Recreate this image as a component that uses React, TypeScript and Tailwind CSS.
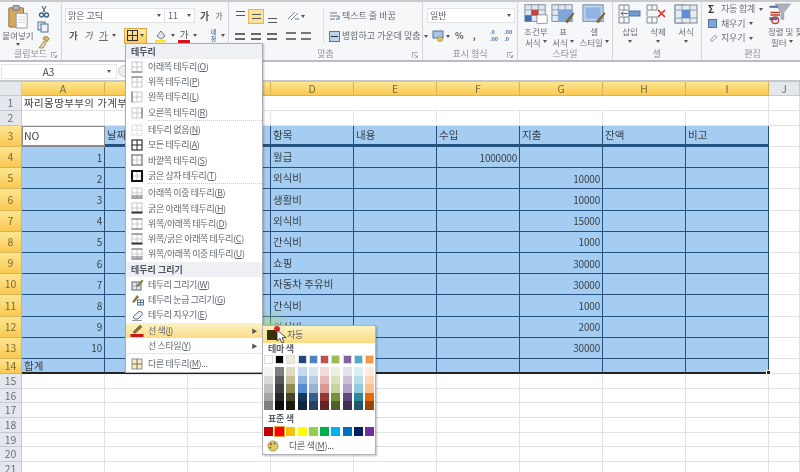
import * as React from "react"

const themeTop = ["#ffffff", "#000000", "#eeece1", "#1f497d", "#4f81bd", "#c0504d", "#9bbb59", "#8064a2", "#4bacc6", "#f79646"]
const themeTints = [
  ["#f2f2f2", "#d9d9d9", "#bfbfbf", "#a6a6a6", "#808080"],
  ["#7f7f7f", "#595959", "#404040", "#262626", "#0d0d0d"],
  ["#ddd9c3", "#c4bd97", "#938953", "#494429", "#1d1b10"],
  ["#c6d9f0", "#8db3e2", "#548dd4", "#17365d", "#0f243e"],
  ["#dbe5f1", "#b8cce4", "#95b3d7", "#366092", "#244061"],
  ["#f2dcdb", "#e5b9b7", "#d99694", "#953734", "#632423"],
  ["#ebf1dd", "#d7e3bc", "#c3d69b", "#76923c", "#4f6128"],
  ["#e5e0ec", "#ccc1d9", "#b2a2c7", "#5f497a", "#3f3151"],
  ["#dbeef3", "#b7dde8", "#92cddc", "#31859b", "#205867"],
  ["#fdeada", "#fbd5b5", "#fac08f", "#e36c09", "#974806"],
]
const standard = ["#c00000", "#ff0000", "#ffc000", "#ffff00", "#92d050", "#00b050", "#00b0f0", "#0070c0", "#002060", "#7030a0"]

const columns = ["A", "B", "C", "D", "E", "F", "G", "H", "I"]

const tableRows = [
  { no: 1, item: "월급", income: "1000000", spend: "" },
  { no: 2, item: "외식비", income: "", spend: "10000" },
  { no: 3, item: "생활비", income: "", spend: "10000" },
  { no: 4, item: "외식비", income: "", spend: "15000" },
  { no: 5, item: "간식비", income: "", spend: "1000" },
  { no: 6, item: "쇼핑", income: "", spend: "30000" },
  { no: 7, item: "자동차 주유비", income: "", spend: "30000" },
  { no: 8, item: "간식비", income: "", spend: "1000" },
  { no: 9, item: "외식비", income: "", spend: "2000" },
  { no: 10, item: "", income: "", spend: "30000" },
]

type Edge = "top" | "bottom" | "left" | "right" | "outer" | "all" | "thick" | "none" | "dbl" | "thickb" | "tb" | "tthickb" | "tdbl"

function BorderIcon({ kind, className = "" }: { kind: Edge; className?: string }) {
  const has = (...k: Edge[]) => k.includes(kind)
  const dark = "#666b70"
  return (
    <svg width="12" height="12" viewBox="0 0 12 12" className={className}>
      <rect x="1" y="1" width="10" height="10" fill="none" stroke="#c4c8cc" strokeWidth="1" strokeDasharray={has("none") ? "1.5 1" : undefined} />
      <path d="M6 1V11M1 6H11" stroke={has("all") ? "#222" : "#c4c8cc"} strokeWidth="1" strokeDasharray={has("none") ? "1.5 1" : undefined} />
      {has("top", "tb", "tthickb", "tdbl", "outer") && <path d="M0.5 1H11.5" stroke={dark} />}
      {has("bottom", "tb", "outer", "dbl", "tdbl") && <path d="M0.5 11H11.5" stroke={dark} />}
      {has("left", "outer") && <path d="M1 0.5V11.5" stroke={dark} />}
      {has("right", "outer") && <path d="M11 0.5V11.5" stroke={dark} />}
      {has("all") && <rect x="1" y="1" width="10" height="10" fill="none" stroke="#222" />}
      {has("thick") && <rect x="1" y="1" width="10" height="10" fill="none" stroke="#111" strokeWidth="2" />}
      {has("dbl", "tdbl") && <path d="M0.5 9H11.5" stroke={dark} />}
      {has("thickb", "tthickb") && <path d="M0.5 10.5H11.5" stroke="#333" strokeWidth="2" />}
    </svg>
  )
}

function MenuRow({ icon, label, hot, suffix = "", arrow, active }: {
  icon?: React.ReactNode
  label?: string
  hot?: string
  suffix?: string
  arrow?: boolean
  active?: boolean
}) {
  return (
    <div className={`flex h-[15.3px] items-center text-[9px] tracking-[-0.4px] text-[#60666f] ${active ? "bg-gradient-to-b from-[#fdf3c4] to-[#fbdc86]" : ""}`}>
      <span className="flex w-[22px] shrink-0 justify-center">{icon}</span>
      <span className="whitespace-nowrap">
        {label}
        {hot && (
          <>
            (<span className="underline">{hot}</span>)
          </>
        )}
        {suffix}
      </span>
      {arrow && <span className="ml-auto mr-[5px] text-[6px] text-[#555]">▶</span>}
    </div>
  )
}

function MenuHead({ children }: { children: React.ReactNode }) {
  return <div className="flex h-[15px] items-center bg-[#eef0f3] pl-[5px] text-[9px] font-bold text-[#4a515b]">{children}</div>
}

function BorderMenu() {
  return (
    <div className="absolute left-[125px] top-[43px] z-20 w-[138px] border border-[#a9adb3] bg-white shadow-[1px_1px_2px_rgba(0,0,0,0.25)]">
      <MenuHead>테두리</MenuHead>
      <MenuRow icon={<BorderIcon kind="bottom" />} label="아래쪽 테두리" hot="O" />
      <MenuRow icon={<BorderIcon kind="top" />} label="위쪽 테두리" hot="P" />
      <MenuRow icon={<BorderIcon kind="left" />} label="왼쪽 테두리" hot="L" />
      <MenuRow icon={<BorderIcon kind="right" />} label="오른쪽 테두리" hot="R" />
      <div className="ml-[22px] h-[2px] border-t border-dotted border-[#c9ccd1]" />
      <MenuRow icon={<BorderIcon kind="none" />} label="테두리 없음" hot="N" />
      <MenuRow icon={<BorderIcon kind="all" />} label="모든 테두리" hot="A" />
      <MenuRow icon={<BorderIcon kind="outer" />} label="바깥쪽 테두리" hot="S" />
      <MenuRow icon={<BorderIcon kind="thick" />} label="굵은 상자 테두리" hot="T" />
      <div className="ml-[22px] h-[2px] border-t border-dotted border-[#c9ccd1]" />
      <MenuRow icon={<BorderIcon kind="dbl" />} label="아래쪽 이중 테두리" hot="B" />
      <MenuRow icon={<BorderIcon kind="thickb" />} label="굵은 아래쪽 테두리" hot="H" />
      <MenuRow icon={<BorderIcon kind="tb" />} label="위쪽/아래쪽 테두리" hot="D" />
      <MenuRow icon={<BorderIcon kind="tthickb" />} label="위쪽/굵은 아래쪽 테두리" hot="C" />
      <MenuRow icon={<BorderIcon kind="tdbl" />} label="위쪽/아래쪽 이중 테두리" hot="U" />
      <MenuHead>테두리 그리기</MenuHead>
      <MenuRow icon={<DrawIcon />} label="테두리 그리기" hot="W" />
      <MenuRow icon={<GridPenIcon />} label="테두리 눈금 그리기" hot="G" />
      <MenuRow icon={<EraserIcon />} label="테두리 지우기" hot="E" />
      <MenuRow icon={<PenColorIcon />} label="선 색" hot="I" arrow active />
      <MenuRow label="선 스타일" hot="Y" arrow />
      <div className="h-[3px] border-t border-[#e2e4e7]" />
      <MenuRow icon={<MoreBorderIcon />} label="다른 테두리" hot="M" suffix="..." />
    </div>
  )
}

function DrawIcon() {
  return (
    <svg width="13" height="13" viewBox="0 0 13 13">
      <rect x="1" y="4" width="9" height="8" fill="#dfe8f3" stroke="#5c6670" />
      <path d="M1 8H10M5.5 4V12" stroke="#9aa3ad" />
      <path d="M5 8L11 1.5L12.5 3L7 9Z" fill="#8a7a40" />
    </svg>
  )
}

function GridPenIcon() {
  return (
    <svg width="13" height="13" viewBox="0 0 13 13">
      <path d="M1 9L6 2L8 4L3 10Z" fill="#8a7a40" />
      <rect x="6.5" y="7" width="6" height="5" fill="none" stroke="#52708f" />
      <path d="M9.5 7V12M6.5 9.5H12.5" stroke="#52708f" />
    </svg>
  )
}

function EraserIcon() {
  return (
    <svg width="13" height="13" viewBox="0 0 13 13">
      <path d="M2 8L7 3C8 2 11 2.5 11.5 4C12 5 11 6 10 7L7 10H3.5Z" fill="#e8ecf2" stroke="#6a7480" />
      <path d="M1 11.5H11" stroke="#8f98a3" />
    </svg>
  )
}

function PenColorIcon() {
  return (
    <svg width="14" height="13" viewBox="0 0 14 13">
      <path d="M3 8L10 1L12 3L5 9.5Z" fill="#8f6f3a" stroke="#5d4a28" strokeWidth="0.5" />
      <rect x="0.5" y="10" width="13" height="3" fill="#d2161c" />
    </svg>
  )
}

function MoreBorderIcon() {
  return (
    <svg width="12" height="12" viewBox="0 0 12 12">
      <rect x="1" y="1" width="10" height="10" fill="#f6ecd0" stroke="#8a8f96" />
      <path d="M6 1V11M1 6H11" stroke="#8a6d2f" />
    </svg>
  )
}

function Swatch({ color, className = "" }: { color: string; className?: string }) {
  return <span className={`block w-[9px] ${className}`} style={{ backgroundColor: color }} />
}

function ColorMenu() {
  return (
    <div className="absolute left-[262px] top-[325px] z-30 w-[114px] border border-[#b0b4ba] bg-white shadow-[1px_1px_2px_rgba(0,0,0,0.25)]">
      <div className="flex h-[17px] items-center bg-gradient-to-b from-[#fdf2c0] to-[#fbdb80]">
        <span className="ml-[4px] block h-[10px] w-[10px] bg-[#343409]" />
        <span className="ml-[10px] text-[9px] tracking-[-0.3px] text-[#5a5c60]">자동</span>
      </div>
      <div className="flex h-[11px] items-center pl-[5px] text-[9px] font-bold tracking-[-0.3px] text-[#596069]">테마 색</div>
      <div className="mt-[1px] flex justify-between px-[1px]">
        {themeTop.map((c) => (
          <Swatch key={c} color={c} className="h-[9px] border border-[#dcdcdc]" />
        ))}
      </div>
      <div className="mt-[3px] flex justify-between px-[1px]">
        {themeTints.map((col, i) => (
          <div key={i} className="flex flex-col">
            {col.map((c) => (
              <Swatch key={c} color={c} className="h-[8.5px]" />
            ))}
          </div>
        ))}
      </div>
      <div className="mt-[4px] flex h-[11px] items-center pl-[5px] text-[9px] font-bold tracking-[-0.3px] text-[#596069]">표준 색</div>
      <div className="mt-[2px] flex justify-between px-[1px]">
        {standard.map((c) => (
          <Swatch key={c} color={c} className={`h-[9px] ${c === "#ff0000" ? "outline outline-1 outline-[#f2a13a]" : ""}`} />
        ))}
      </div>
      <div className="mt-[2px] flex h-[16px] items-center text-[9px] tracking-[-0.3px] text-[#5a5c60]">
        <svg width="12" height="12" viewBox="0 0 12 12" className="ml-[4px]">
          <circle cx="6" cy="6" r="5" fill="#e8c860" stroke="#8b7430" strokeWidth="0.7" />
          <circle cx="4" cy="4" r="1" fill="#c22" />
          <circle cx="7.5" cy="3.5" r="1" fill="#27a" />
          <circle cx="3.5" cy="7.5" r="1" fill="#2a5" />
        </svg>
        <span className="ml-[10px]">
          다른 색(<span className="underline">M</span>)...
        </span>
      </div>
    </div>
  )
}

function CursorGlow() {
  return <div className="absolute left-[244px] top-[308px] z-10 h-[50px] w-[50px] rounded-full bg-[radial-gradient(circle,rgba(170,220,110,0.8),rgba(170,220,110,0)_70%)]" />
}

function Cursor() {
  return (
    <div className="pointer-events-none absolute left-[274px] top-[326px] z-40 h-[20px] w-[14px]">
      <span className="absolute left-0 top-0 block h-[6px] w-[6px] rounded-full bg-[#d8262c]" />
      <svg width="12" height="16" viewBox="0 0 12 16" className="absolute left-[2px] top-[3px]">
        <path d="M1 1V12L4 9.5L6 14L8 13L6 8.8L10 8.5Z" fill="#fff" stroke="#222" strokeWidth="0.8" />
      </svg>
    </div>
  )
}

function Caret({ className = "" }: { className?: string }) {
  return <span className={`inline-block h-0 w-0 border-x-[2px] border-t-[3px] border-x-transparent border-t-[#555] ${className}`} />
}

function RibbonGroup({ label, width, launcher, children }: {
  label: string
  width: string
  launcher?: boolean
  children: React.ReactNode
}) {
  return (
    <div className={`flex shrink-0 flex-col border-r border-[#d3d6da] ${width}`}>
      <div className="h-[47px]">{children}</div>
      <div className="relative flex h-[12px] items-center justify-center text-[9px] text-[#8f949b]">
        {label}
        {launcher && (
          <svg width="6" height="6" viewBox="0 0 6 6" className="absolute right-[4px] top-[4px]">
            <path d="M0.5 5.5V0.5H5.5M2 2L5.5 5.5M5.5 3V5.5H3" fill="none" stroke="#9097a0" strokeWidth="0.8" />
          </svg>
        )}
      </div>
    </div>
  )
}

function PasteIcon() {
  return (
    <svg width="22" height="24" viewBox="0 0 24 26">
      <rect x="2" y="3" width="16" height="21" rx="1" fill="#d9a860" stroke="#8d6a38" />
      <rect x="6.5" y="0.5" width="7" height="5" rx="1" fill="#aeb4bb" stroke="#6d7278" />
      <path d="M10 9H22V25H10Z" fill="#fdfdfd" stroke="#8f959c" />
      <path d="M12 13H20M12 16H20M12 19H20" stroke="#cfd3d8" />
    </svg>
  )
}

function CellStylesIcon({ variant }: { variant: 0 | 1 | 2 }) {
  return (
    <svg width="24" height="22" viewBox="0 0 26 22">
      <rect x="1" y="1" width="22" height="18" fill={variant === 2 ? "#b7d0ee" : "#dfe8f3"} stroke="#7e8a97" />
      {variant !== 2 && <path d="M1 6.5H23M1 12.5H23M8 1V19M15.5 1V19" stroke="#7e8a97" strokeWidth="0.8" />}
      {variant === 0 && <rect x="8" y="6.5" width="7.5" height="6" fill="#c8423c" />}
      {variant === 0 && <rect x="1" y="12.5" width="7" height="6.5" fill="#3f6fb0" />}
      {variant === 1 && <rect x="8" y="6.5" width="15" height="12.5" fill="#7fa6d8" />}
      {variant === 2 && <rect x="4" y="4" width="16" height="12" fill="#8fb4e4" />}
      {variant === 0 && <rect x="14" y="12" width="11" height="9" fill="#fff" stroke="#555" strokeWidth="0.6" />}
      {variant !== 0 && <path d="M15 19L24 9L25.5 10.5L18 21Z" fill="#7b6a3d" />}
    </svg>
  )
}

function CellsIcon({ variant }: { variant: 0 | 1 | 2 }) {
  return (
    <svg width="24" height="20" viewBox="0 0 24 20">
      <path d="M1 1H11V6H1ZM1 13H11V19H1ZM6 1V6M6 13V19M1 7V12" fill="none" stroke="#7e8a97" />
      {variant === 0 && <rect x="11" y="7" width="11" height="5" fill="#6f9bd1" stroke="#4d76a8" />}
      {variant === 0 && <path d="M3 9.5H10M3 9.5L5.5 7.5M3 9.5L5.5 11.5" fill="none" stroke="#444" strokeWidth="0.8" />}
      {variant === 1 && <path d="M12 6L19 13M19 6L12 13" stroke="#d6332b" strokeWidth="1.6" />}
      {variant === 2 && <rect x="1" y="1" width="22" height="18" fill="#e6ecf4" stroke="#7e8a97" />}
      {variant === 2 && <path d="M8 1V19M16 1V19M1 6H23M1 14H23" stroke="#7e8a97" strokeWidth="0.8" />}
      {variant === 2 && <rect x="8" y="6" width="8" height="8" fill="#5f8fd0" />}
    </svg>
  )
}

function BigButton({ icon, lines, widthClass }: { icon: React.ReactNode; lines: [string, string]; widthClass: string }) {
  return (
    <div className={`flex flex-col items-center pt-[2px] text-[8.5px] leading-[10.5px] text-[#6b7078] ${widthClass}`}>
      <div className="flex h-[22px] items-center">{icon}</div>
      <div className="mt-[1px] whitespace-nowrap">{lines[0]}</div>
      <div className="flex h-[10.5px] items-center gap-[2px] whitespace-nowrap">
        {lines[1]}
        <Caret />
      </div>
    </div>
  )
}

function Ribbon() {
  return (
    <div className="flex h-[62px] border-b-2 border-[#b9bdc3] bg-[#f6f7f9] pt-[1px] shadow-[inset_0_2px_0_#c9cbce]">
      <RibbonGroup label="클립보드" width="w-[62px]" launcher>
        <div className="flex pt-[4px]">
          <div className="flex w-[36px] flex-col items-center text-[8.5px] leading-[10px] text-[#6b7078]">
            <PasteIcon />
            <span className="mt-[1px] whitespace-nowrap">붙여넣기</span>
            <Caret className="mt-[3px]" />
          </div>
          <div className="flex flex-col items-center gap-[3px] pl-[1px]">
            <svg width="12" height="13" viewBox="0 0 12 13">
              <path d="M4 1L7 7M8 1L5 7" stroke="#6c7580" strokeWidth="1.2" />
              <circle cx="3.5" cy="10" r="2" fill="none" stroke="#3c5f8c" strokeWidth="1.3" />
              <circle cx="8.5" cy="10" r="2" fill="none" stroke="#3c5f8c" strokeWidth="1.3" />
            </svg>
            <svg width="14" height="12" viewBox="0 0 14 12">
              <rect x="1" y="1" width="7" height="8" fill="#dbe6f3" stroke="#55729a" />
              <rect x="4" y="3" width="7" height="8" fill="#eef3f9" stroke="#55729a" />
            </svg>
            <svg width="12" height="13" viewBox="0 0 12 13">
              <rect x="6" y="0.5" width="5" height="4" fill="#d7b560" stroke="#8a6d2f" strokeWidth="0.7" transform="rotate(35 8 2)" />
              <path d="M6 5L1 12H5L8 7Z" fill="#e9d59c" stroke="#8a6d2f" strokeWidth="0.7" />
            </svg>
          </div>
        </div>
      </RibbonGroup>

      <RibbonGroup label="" width="w-[167px]">
        <div className="flex flex-col pl-[3px] pt-[7px]">
          <div className="flex h-[15px] items-center">
            <div className="flex h-[15px] w-[100px] items-center justify-between border border-[#dfe2e6] bg-white pl-[2px] pr-[3px] text-[9px] text-[#5c6067]">
              맑은 고딕
              <Caret />
            </div>
            <div className="flex h-[15px] w-[30px] items-center justify-between border border-l-0 border-[#dfe2e6] bg-white pl-[3px] pr-[3px] text-[9px] text-[#5c6067]">
              11
              <Caret />
            </div>
            <span className="ml-[5px] text-[10px] font-bold text-[#555]">가</span>
            <span className="ml-[6px] text-[8px] text-[#666]">가</span>
          </div>
          <div className="mt-[4px] flex h-[17px] items-center">
            <span className="ml-[4px] w-[15px] text-[9.5px] font-bold text-[#555]">가</span>
            <span className="w-[15px] text-[9.5px] italic text-[#666]">가</span>
            <span className="w-[13px] text-[9.5px] text-[#666] underline">가</span>
            <Caret />
            <div className="ml-[8px] flex h-[16px] w-[23px] items-center gap-[1px] border border-[#d9a93f] bg-gradient-to-b from-[#fde9a5] to-[#fbce5e] pl-[2px]">
              <svg width="11" height="11" viewBox="0 0 11 11">
                <rect x="0.5" y="0.5" width="10" height="10" fill="none" stroke="#333" />
                <path d="M5.5 0.5V10.5M0.5 5.5H10.5" stroke="#333" />
              </svg>
              <Caret className="ml-[1px] border-t-[#333]" />
            </div>
            <svg width="14" height="14" viewBox="0 0 14 14" className="ml-[7px]">
              <path d="M3 7L7 2L11 7L7 10Z" fill="#e2e7ee" stroke="#6d7680" />
              <rect x="1" y="11" width="11" height="2.5" fill="#ffe330" />
            </svg>
            <Caret className="ml-[3px]" />
            <span className="ml-[3px] flex h-[15px] w-[12px] flex-col items-center text-[9.5px] leading-[12px] text-[#555]">
              가
              <span className="block h-[2.5px] w-[12px] bg-[#d2161c]" />
            </span>
            <Caret className="ml-[3px]" />
            <span className="ml-[14px] flex flex-col text-[5.5px] font-bold leading-[7px] text-[#4f6f9c]">
              <span>내</span>
              <span>천</span>
            </span>
            <Caret className="ml-[5px]" />
          </div>
        </div>
      </RibbonGroup>

      <RibbonGroup label="맞춤" width="w-[194px]" launcher>
        <div className="flex pl-[3px] pt-[7px]">
          <div className="flex flex-col">
            <div className="flex h-[16px] items-center">
              {["top", "mid", "bot"].map((v) => (
                <span key={v} className={`flex h-[15px] w-[16px] justify-center ${v === "mid" ? "items-center border border-[#e2b74e] bg-[#fde29a]" : v === "top" ? "items-start pt-[2px]" : "items-end pb-[1px]"}`}>
                  <span className="block h-[5px] w-[9px] border-y border-[#555]" />
                </span>
              ))}
              <svg width="14" height="12" viewBox="0 0 14 12" className="ml-[6px]">
                <path d="M2 9L9 2M5 10L12 3" stroke="#7b8087" />
                <path d="M9 9H13" stroke="#4a6f9f" />
              </svg>
              <Caret className="ml-[1px]" />
            </div>
            <div className="mt-[4px] flex h-[16px] items-center">
              {[0, 1, 2].map((v) => (
                <span key={v} className="flex h-[15px] w-[16px] items-center justify-center">
                  <span className="block h-[7px] w-[10px] border-y-2 border-[#666]" />
                </span>
              ))}
              <span className="ml-[6px] block h-[8px] w-[10px] border-y-2 border-[#777]" />
              <span className="ml-[5px] block h-[8px] w-[10px] border-y-2 border-[#777]" />
            </div>
          </div>
          <div className="ml-[12px] flex flex-col border-l border-[#dcdfe3] pl-[5px] text-[9px] text-[#666b73]">
            <div className="flex h-[16px] items-center gap-[2px] whitespace-nowrap">
              <svg width="11" height="11" viewBox="0 0 11 11">
                <path d="M1 2H8M1 5H10M1 8H6" stroke="#6d7680" />
                <path d="M10 5V8H7" fill="none" stroke="#3f6fb0" />
              </svg>
              텍스트 줄 바꿈
            </div>
            <div className="mt-[4px] flex h-[16px] items-center gap-[2px] whitespace-nowrap">
              <svg width="11" height="11" viewBox="0 0 11 11">
                <rect x="0.5" y="0.5" width="10" height="10" fill="#bcd2ec" stroke="#5277a8" />
                <path d="M2 5.5H9" stroke="#333" />
              </svg>
              병합하고 가운데 맞춤
              <Caret className="ml-[1px]" />
            </div>
          </div>
        </div>
      </RibbonGroup>

      <RibbonGroup label="표시 형식" width="w-[95px]" launcher>
        <div className="flex flex-col px-[4px] pt-[7px]">
          <div className="flex h-[15px] w-[88px] items-center justify-between border border-[#dfe2e6] bg-white pl-[2px] pr-[3px] text-[9px] text-[#5c6067]">
            일반
            <Caret />
          </div>
          <div className="mt-[5px] flex h-[16px] items-center pl-[5px] text-[9px] text-[#555]">
            <svg width="13" height="12" viewBox="0 0 13 12">
              <rect x="1" y="1" width="10" height="7" fill="#a7c3e6" stroke="#4f74a5" />
              <circle cx="8" cy="9" r="2.5" fill="#e8c450" stroke="#93772b" strokeWidth="0.6" />
            </svg>
            <Caret className="ml-[1px]" />
            <span className="ml-[5px] font-bold">%</span>
            <span className="ml-[9px] font-bold">,</span>
            <span className="ml-[14px] flex flex-col text-[5.5px] font-bold leading-[7px] text-[#4a6f9f]">
              <span>.0</span>
              <span>.00</span>
            </span>
            <span className="ml-[6px] flex flex-col text-[5.5px] font-bold leading-[7px] text-[#4a6f9f]">
              <span>.00</span>
              <span>.0</span>
            </span>
          </div>
        </div>
      </RibbonGroup>

      <RibbonGroup label="스타일" width="w-[95px]">
        <div className="flex pl-[4px]">
          <BigButton icon={<CellStylesIcon variant={0} />} lines={["조건부", "서식"]} widthClass="w-[28px]" />
          <BigButton icon={<CellStylesIcon variant={1} />} lines={["표", "서식"]} widthClass="w-[27px]" />
          <BigButton icon={<CellStylesIcon variant={2} />} lines={["셀", "스타일"]} widthClass="w-[36px]" />
        </div>
      </RibbonGroup>

      <RibbonGroup label="셀" width="w-[89px]">
        <div className="flex pl-[3px]">
          <BigButton icon={<CellsIcon variant={0} />} lines={["삽입", ""]} widthClass="w-[28px]" />
          <BigButton icon={<CellsIcon variant={1} />} lines={["삭제", ""]} widthClass="w-[28px]" />
          <BigButton icon={<CellsIcon variant={2} />} lines={["서식", ""]} widthClass="w-[28px]" />
        </div>
      </RibbonGroup>

      <div className="flex flex-1 flex-col">
        <div className="flex h-[47px]">
          <div className="flex w-[62px] shrink-0 flex-col pl-[6px] pt-[1px] text-[9px] leading-[14.5px] tracking-[-0.2px] text-[#6b7078]">
            <div className="flex items-center gap-[2px] whitespace-nowrap">
              <span className="w-[11px] text-[10px] font-bold text-[#333]">Σ</span>자동 합계<Caret className="ml-[2px]" />
            </div>
            <div className="flex items-center gap-[2px] whitespace-nowrap">
              <span className="mr-[2px] block h-[9px] w-[9px] border border-[#4f74a5] bg-[#7ea6d8]" />채우기<Caret className="ml-[2px]" />
            </div>
            <div className="flex items-center gap-[2px] whitespace-nowrap">
              <svg width="11" height="9" viewBox="0 0 9 9">
                <path d="M1 6L5 2C6 1 8 2 8 3L4 7H2Z" fill="#eef1f5" stroke="#767f8a" strokeWidth="0.7" />
              </svg>
              지우기<Caret className="ml-[2px]" />
            </div>
          </div>
          <div className="flex flex-col items-start pl-[4px] pt-[2px] text-[8.5px] leading-[10.5px] text-[#6b7078]">
            <svg width="24" height="22" viewBox="0 0 24 23">
              <path d="M7 1H23L16 10V17H13V10Z" fill="#aab2bd" stroke="#8a929c" strokeWidth="0.6" />
              <path d="M1 3H10V5H1ZM1 15H9V18H1Z" fill="#4e6f9a" />
              <path d="M2 10H12M2 12.5H12" stroke="#c43a32" strokeWidth="1.5" />
              <circle cx="7" cy="18" r="3.5" fill="none" stroke="#c43a32" strokeWidth="1.5" />
            </svg>
            <span className="mt-[1px] whitespace-nowrap">정렬 및 찾</span>
            <span className="flex items-center gap-[2px] whitespace-nowrap pl-[3px]">
              필터
              <Caret />
            </span>
          </div>
        </div>
        <div className="flex h-[12px] items-center justify-center text-[9px] text-[#8f949b]">편집</div>
      </div>
    </div>
  )
}

function FormulaBar() {
  return (
    <div className="flex h-[20px] items-center border-b-2 border-[#c4c7cc] bg-white">
      <div className="ml-[1px] flex h-[15px] w-[116px] items-center border border-[#e4e6e9] text-[10px] text-[#444]">
        <span className="flex-1 pr-[12px] text-center">A3</span>
        <Caret className="mr-[5px] border-t-[#333]" />
      </div>
      <span className="ml-[1px] block h-[12px] w-[12px] rounded-full border border-[#c9ccd1] bg-[#eceef1]" />
    </div>
  )
}

const bodyFont = "font-['Noto_Sans_CJK_KR','Noto_Sans',sans-serif]"
const hdrOn = "bg-gradient-to-b from-[#fde58f] to-[#f9c94f] text-[#7a6b3c] border-r border-b border-[#d9b457]"
const hdrOff = "bg-[#e4e7ec] text-[#6b7079] border-r border-b border-[#c6c9cf]"
const plainCell = "border-r border-b border-[#e0e2e5]"
const selCell = "bg-[#a4cdf1] border-r border-b border-[#24517e] text-[#3a3f46] text-[10.5px]"
const numCell = "text-[10px] tracking-[-0.2px]"

function RowHead({ n, on, h }: { n: number; on: boolean; h: string }) {
  return <div className={`flex items-center justify-center text-[10.5px] ${h} ${on ? hdrOn : hdrOff}`}>{n}</div>
}

function Sheet() {
  return (
    <div className="grid grid-cols-[22px_repeat(9,83px)_31px] text-[10.5px] text-[#444]">
      <div className={`h-[14px] ${hdrOff}`} />
      {columns.map((c) => (
        <div key={c} className={`flex h-[14px] items-center justify-center ${hdrOn}`}>{c}</div>
      ))}
      <div className={`flex h-[14px] items-center justify-center ${hdrOff}`}>J</div>

      <RowHead n={1} on={false} h="h-[15px]" />
      <div className={`col-span-9 flex h-[15px] items-center whitespace-nowrap pl-[2px] tracking-[0.4px] ${plainCell}`}>짜리몽땅부부의 가계부</div>
      <div className={`h-[15px] ${plainCell}`} />

      <RowHead n={2} on={false} h="h-[15px]" />
      {columns.map((c) => (
        <div key={c} className={`h-[15px] ${plainCell}`} />
      ))}
      <div className={`h-[15px] ${plainCell}`} />

      <RowHead n={3} on h="h-[21px]" />
      <div className="flex h-[21px] items-center border border-[#8a8a8a] border-b-2 bg-white pl-[1px] text-[10.5px]">NO</div>
      {["날짜", "", "항목", "내용", "수입", "지출", "잔액", "비고"].map((t, i) => (
        <div key={i} className={`flex h-[21px] items-center border-b-[3px] pl-[2px] ${selCell}`}>{t}</div>
      ))}
      <div className={`h-[21px] ${plainCell}`} />

      {tableRows.map((r) => (
        <React.Fragment key={r.no}>
          <RowHead n={r.no + 3} on h="h-[21.2px]" />
          <div className={`flex h-[21.2px] items-center justify-end pr-[2px] ${selCell} ${numCell}`}>{r.no}</div>
          <div className={`h-[21.2px] ${selCell}`} />
          <div className={`h-[21.2px] ${selCell}`} />
          <div className={`flex h-[21.2px] items-center whitespace-nowrap pl-[2px] ${selCell}`}>{r.item}</div>
          <div className={`h-[21.2px] ${selCell}`} />
          <div className={`flex h-[21.2px] items-center justify-end pr-[2px] ${selCell} ${numCell}`}>{r.income}</div>
          <div className={`flex h-[21.2px] items-center justify-end pr-[2px] ${selCell} ${numCell}`}>{r.spend}</div>
          <div className={`h-[21.2px] ${selCell}`} />
          <div className={`h-[21.2px] ${selCell}`} />
          <div className={`h-[21.2px] ${plainCell}`} />
        </React.Fragment>
      ))}

      <RowHead n={14} on h="h-[15px]" />
      <div className={`flex h-[15px] items-center border-b-2 border-b-[#222] pl-[2px] ${selCell}`}>합계</div>
      {columns.slice(1).map((c) => (
        <div key={c} className={`relative h-[15px] border-b-2 border-b-[#222] ${selCell}`}>
          {c === "I" && <span className="absolute -bottom-[3px] -right-[3px] block h-[5px] w-[5px] border border-white bg-[#222]" />}
        </div>
      ))}
      <div className={`h-[15px] ${plainCell}`} />

      {[15, 16, 17, 18, 19, 20, 21].map((n) => (
        <React.Fragment key={n}>
          <RowHead n={n} on={false} h="h-[14.7px]" />
          {columns.map((c) => (
            <div key={c} className={`h-[14.7px] ${plainCell}`} />
          ))}
          <div className={`h-[14.7px] ${plainCell}`} />
        </React.Fragment>
      ))}
    </div>
  )
}

export default function App() {
  return (
    <div className={`relative h-[472px] w-[800px] overflow-hidden bg-white blur-[0.3px] ${bodyFont}`}>
      <Ribbon />
      <FormulaBar />
      <Sheet />
      <CursorGlow />
      <BorderMenu />
      <ColorMenu />
      <Cursor />
    </div>
  )
}
